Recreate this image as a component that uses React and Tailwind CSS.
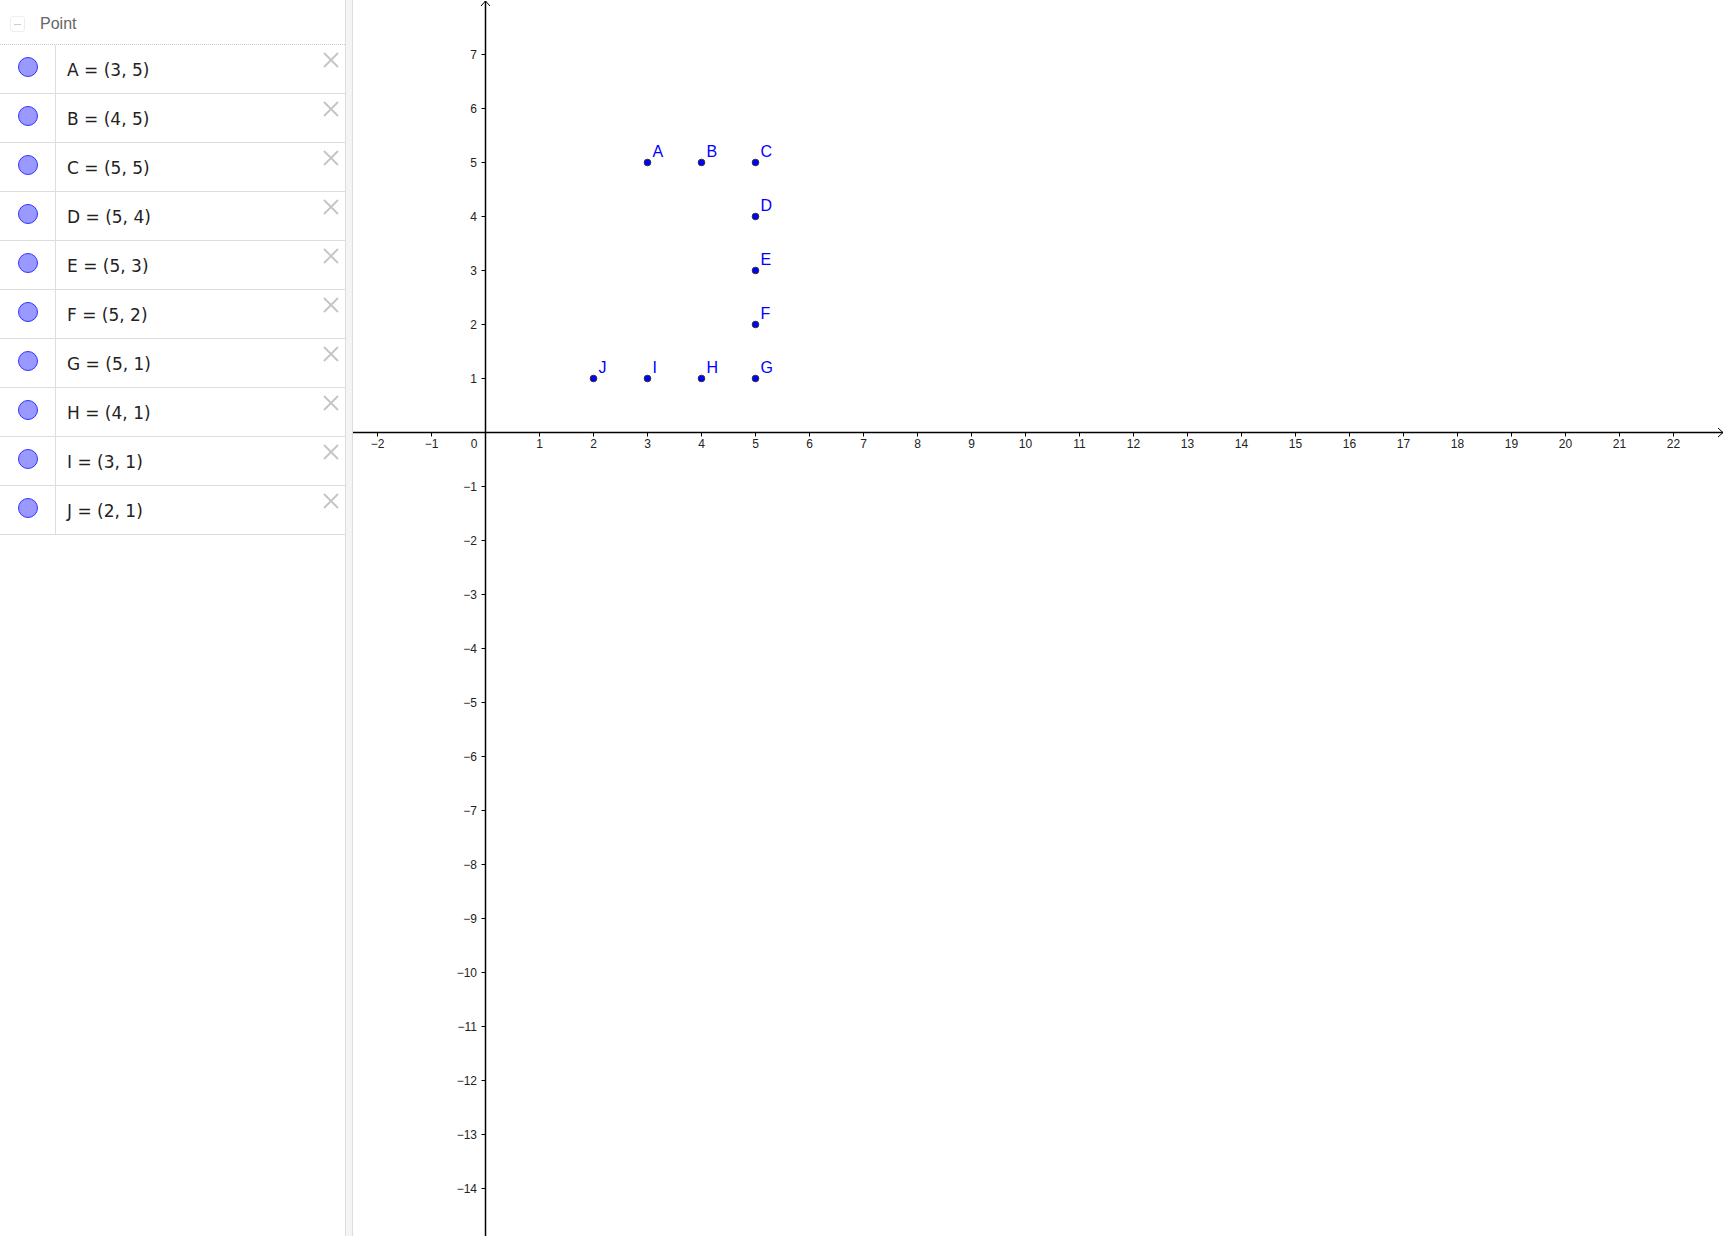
const points = [
  { name: 'A', x: 3, y: 5 },
  { name: 'B', x: 4, y: 5 },
  { name: 'C', x: 5, y: 5 },
  { name: 'D', x: 5, y: 4 },
  { name: 'E', x: 5, y: 3 },
  { name: 'F', x: 5, y: 2 },
  { name: 'G', x: 5, y: 1 },
  { name: 'H', x: 4, y: 1 },
  { name: 'I', x: 3, y: 1 },
  { name: 'J', x: 2, y: 1 },
]

// graphics view geometry (in view coords, view starts at page x=353)
const OX = 485.5 - 353
const OY = 432.5
const U = 54

const fmt = (n) => (n < 0 ? '\u2212' + Math.abs(n) : String(n))

function DeleteIcon() {
  return (
    <svg width="16" height="16" viewBox="0 0 16 16" className="absolute top-[7px] right-[6px]">
      <path d="M1 1 L15 15 M15 1 L1 15" stroke="#c4c4c4" strokeWidth="1.8" fill="none" />
    </svg>
  )
}

function AlgebraRow({ p }) {
  return (
    <div className="flex h-[49px] border-b border-[#dddddd]">
      <div className="w-[56px] shrink-0 border-r border-[#dddddd] flex justify-center pt-[12px]">
        <div className="w-[20px] h-[20px] rounded-full bg-[#9999ff] border border-[#3333ff]" />
      </div>
      <div className="relative flex-1 pl-[11px] pt-[13px]">
        <span className="text-[17px] leading-[24px] text-[#222] font-['DejaVu_Sans',sans-serif]">
          {p.name} = ({p.x}, {p.y})
        </span>
        <DeleteIcon />
      </div>
    </div>
  )
}

function Graphics() {
  const xs = []
  for (let i = -2; i <= 22; i++) xs.push(i)
  const ys = []
  for (let i = 7; i >= -14; i--) ys.push(i)

  return (
    <svg width="1372" height="1236" className="block" style={{ fontFamily: '"Liberation Sans", Arial, sans-serif' }}>
      {/* axes */}
      <line x1="0" y1={OY} x2="1370" y2={OY} stroke="#000" strokeWidth="1.5" />
      <polyline points={`1365,${OY - 4.5} 1370,${OY} 1365,${OY + 4.5}`} fill="none" stroke="#000" strokeWidth="1" />
      <line x1={OX} y1="1" x2={OX} y2="1236" stroke="#000" strokeWidth="1.5" />
      <polyline points={`${OX - 4.5},6 ${OX},1 ${OX + 4.5},6`} fill="none" stroke="#000" strokeWidth="1" />

      {xs.map((i) =>
        i === 0 ? (
          <text key={i} x={OX - 8} y={OY + 15} fontSize="12" fill="#222" textAnchor="end">
            0
          </text>
        ) : (
          <g key={i}>
            <line x1={OX + i * U} y1={OY} x2={OX + i * U} y2={OY + 4} stroke="#000" strokeWidth="1" />
            <text x={OX + i * U} y={OY + 15} fontSize="12" fill="#222" textAnchor="middle">
              {fmt(i)}
            </text>
          </g>
        )
      )}

      {ys
        .filter((i) => i !== 0)
        .map((i) => (
          <g key={i}>
            <line x1={OX - 4} y1={OY - i * U} x2={OX} y2={OY - i * U} stroke="#000" strokeWidth="1" />
            <text x={OX - 8.5} y={OY - i * U + 4} fontSize="12" fill="#222" textAnchor="end">
              {fmt(i)}
            </text>
          </g>
        ))}

      {points.map((p) => {
        const cx = OX + p.x * U
        const cy = OY - p.y * U
        return (
          <g key={p.name}>
            <circle cx={cx} cy={cy} r="3.3" fill="#0000ff" stroke="#333" strokeWidth="1" />
            <text x={cx + 5} y={cy - 6} fontSize="16" fill="#0000ff">
              {p.name}
            </text>
          </g>
        )
      })}
    </svg>
  )
}

export default function App() {
  return (
    <div className="flex w-[1725px] h-[1236px] bg-white overflow-hidden">
      <div className="w-[345px] shrink-0 bg-white">
        <div className="h-[45px] border-b border-dotted border-[#cccccc] flex items-center pl-[10px] pt-[4px]">
          <div className="w-[15px] h-[16px] rounded-[3px] border border-[#eeeeee] flex items-center justify-center">
            <div className="w-[7px] h-[1px] bg-[#cccccc]" />
          </div>
          <span className="ml-[15px] text-[16px] text-[#666] font-['Liberation_Sans',sans-serif]">Point</span>
        </div>
        {points.map((p) => (
          <AlgebraRow key={p.name} p={p} />
        ))}
      </div>
      <div className="w-[8px] shrink-0 bg-[#f4f4f4] border-l border-r border-[#dddddd]" />
      <div className="flex-1 bg-white">
        <Graphics />
      </div>
    </div>
  )
}
